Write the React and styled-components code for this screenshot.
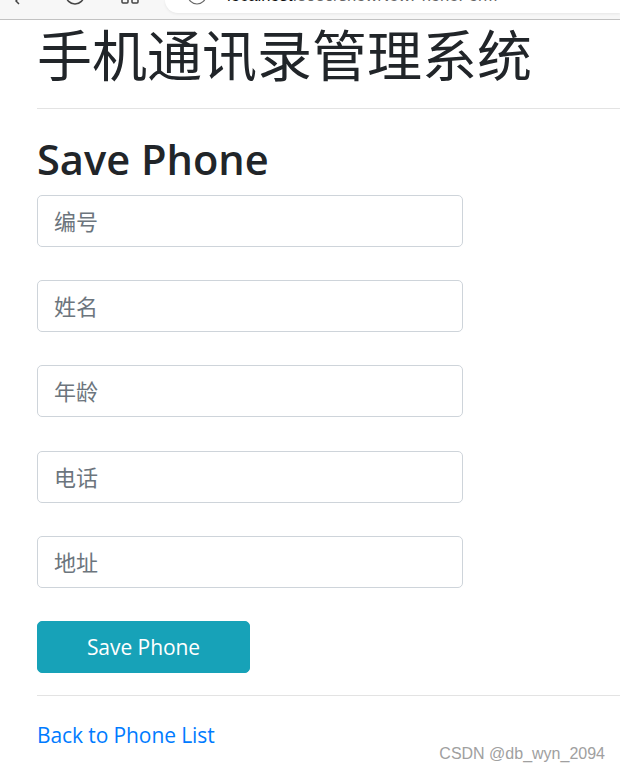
import React from "react";
import styled, { createGlobalStyle } from "styled-components";

const Global = createGlobalStyle`
  html, body { margin: 0; padding: 0; background: #fff; }
  body { font-family: "Open Sans", "Noto Sans CJK SC", sans-serif; color: #212529; }
  * { box-sizing: border-box; }
`;

const Page = styled.div`
  position: relative;
  width: 620px;
  height: 772px;
  overflow: hidden;
`;

const Toolbar = styled.header`
  height: 20px;
  background: #f7f7f7;
  border-bottom: 1px solid #c2c2c2;
  display: flex;
  overflow: hidden;
`;

const NavIcons = styled.svg`
  width: 165px;
  height: 19px;
  flex: none;
`;

const AddressBar = styled.div`
  flex: 1;
  height: 13px;
  background: #fff;
  border-bottom-left-radius: 13px;
  box-shadow: 0 1px 3px rgba(0, 0, 0, 0.07);
  display: flex;
  align-items: flex-start;
  overflow: hidden;
`;

const SiteIcon = styled.svg`
  flex: none;
  width: 62px;
  height: 13px;
`;

const AddressText = styled.span`
  font-family: "Liberation Sans", sans-serif;
  font-size: 16.6px;
  line-height: 14px;
  height: 14px;
  margin-top: -11px;
  color: #666;
  white-space: nowrap;
  flex: none;
`;

const Host = styled.span`
  color: #111;
`;

const Main = styled.main`
  padding-left: 37px;
`;

const Title = styled.h1`
  margin: 0;
  height: 88px;
  font-family: "Noto Sans CJK SC", sans-serif;
  font-size: 55px;
  font-weight: 400;
  line-height: 64px;
  color: #212529;
  white-space: nowrap;
`;

const Rule = styled.hr`
  margin: 0;
  border: 0;
  border-top: 1px solid #e3e3e3;
`;

const Subtitle = styled.h2`
  margin: 0;
  height: 86px;
  padding-top: 22px;
  font-family: "Open Sans", sans-serif;
  font-size: 41.6px;
  font-weight: 600;
  line-height: 56px;
  color: #212529;
`;

const Form = styled.form`
  display: flex;
  flex-direction: column;
  align-items: flex-start;
  gap: 33.2px;
`;

const Field = styled.input`
  width: 426px;
  height: 52px;
  padding: 0 16px 2px;
  border: 1px solid #ced4da;
  border-radius: 5px;
  background: #fff;
  font-family: "Noto Sans CJK SC", sans-serif;
  font-size: 22px;
  color: #495057;
  outline: none;
  &::placeholder { color: #6c757d; opacity: 1; }
`;

const SaveButton = styled.button`
  width: 213px;
  height: 52px;
  border: 1px solid #17a2b8;
  border-radius: 5px;
  background: #17a2b8;
  color: #fff;
  font-family: "Open Sans", sans-serif;
  font-size: 21px;
  letter-spacing: -0.05px;
  line-height: 1;
  padding: 2px 0 0;
`;

const FooterRule = styled(Rule)`
  margin-top: 22px;
`;

const BackLink = styled.a`
  display: block;
  margin-top: 23px;
  font-family: "Open Sans", sans-serif;
  font-size: 21px;
  letter-spacing: -0.1px;
  line-height: 32px;
  color: #007bff;
  text-decoration: none;
`;

const Watermark = styled.span`
  position: absolute;
  right: 15px;
  bottom: 8px;
  font-family: "Liberation Sans", sans-serif;
  font-size: 16px;
  line-height: 20px;
  color: #a0a0a0;
`;

const fields = ["编号", "姓名", "年龄", "电话", "地址"];

export default function App() {
  return (
    <Page>
      <Global />
      <Toolbar>
        <NavIcons viewBox="0 0 165 19" fill="none" stroke="#444" strokeWidth="1.5">
          <path d="M20 -4 L16 1 L19 4" />
          <circle cx="75" cy="-5" r="9" />
          <rect x="122" y="-6" width="6" height="9" rx="1" />
          <rect x="132" y="-6" width="6" height="9" rx="1" />
        </NavIcons>
        <AddressBar>
          <SiteIcon viewBox="0 0 62 13" fill="none" stroke="#666" strokeWidth="1.2">
            <circle cx="32" cy="-5" r="9" />
          </SiteIcon>
          <AddressText>
            <Host>localhost</Host>:8080/showNewPhoneForm
          </AddressText>
        </AddressBar>
      </Toolbar>
      <Main>
        <Title>手机通讯录管理系统</Title>
        <Rule />
        <Subtitle>Save Phone</Subtitle>
        <Form onSubmit={(e) => e.preventDefault()}>
          {fields.map((f) => (
            <Field key={f} type="text" placeholder={f} />
          ))}
          <SaveButton type="submit">Save Phone</SaveButton>
        </Form>
        <FooterRule />
        <BackLink href="#">Back to Phone List</BackLink>
      </Main>
      <Watermark>CSDN @db_wyn_2094</Watermark>
    </Page>
  );
}
